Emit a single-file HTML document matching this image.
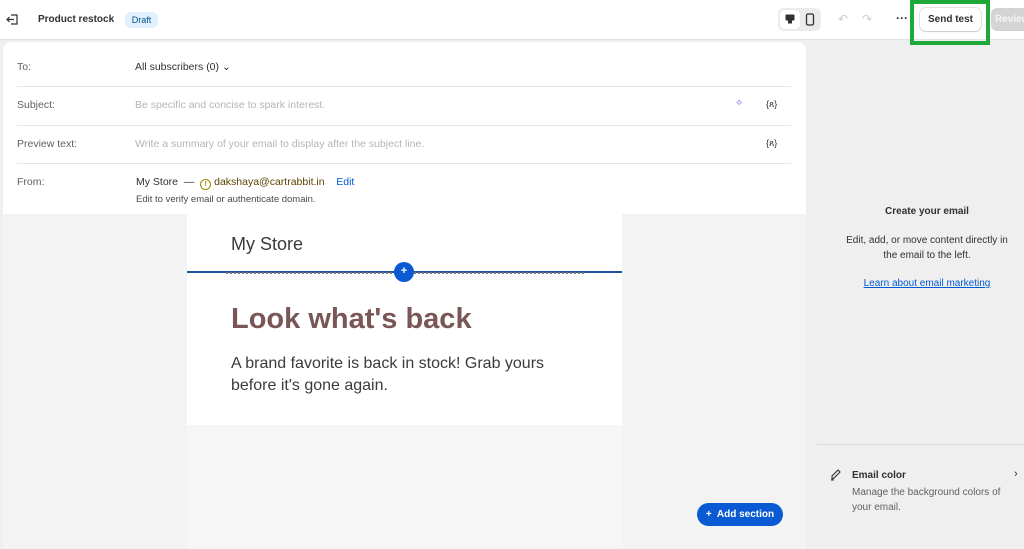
<!DOCTYPE html>
<html><head><style>
*{box-sizing:border-box;margin:0;padding:0}
body{width:1024px;height:549px;overflow:hidden;background:#efefef;font-family:"Liberation Sans",sans-serif;position:relative;color:#303030}
.abs{position:absolute;white-space:nowrap}
.wrap{white-space:normal}
.top{left:0;top:0;width:1024px;height:40px;background:#fff;border-bottom:1px solid #e3e3e3}
.lbl{font-size:10.5px;color:#616161}
.ph{font-size:10.5px;color:#b5b5b5}
.hr{position:absolute;left:17px;width:774px;height:1px;background:#e6e6e6}
</style></head><body>
<div class="abs top">
  <svg class="abs" style="left:6px;top:13px" width="13" height="13" viewBox="0 0 13 13" fill="none" stroke="#303030" stroke-width="1.2"><path d="M5 2h6v9H5M1 6.5h7M3.5 4L1 6.5 3.5 9"/></svg>
  <div class="abs" style="left:38px;top:14px;font-size:10px;font-weight:bold">Product restock</div>
  <div class="abs" style="left:125px;top:12px;width:33px;height:16px;border-radius:6px;background:#e0f0ff;color:#00527c;font-size:9px;text-align:center;line-height:16px">Draft</div>
  <div class="abs" style="left:778px;top:8px;width:43px;height:23px;border-radius:6px;background:#ebebeb"></div>
  <div class="abs" style="left:780px;top:10px;width:20px;height:19px;border-radius:5px;background:#fff"></div>
  <svg class="abs" style="left:784px;top:13px" width="12" height="12" viewBox="0 0 12 12"><rect x="1.5" y="1.5" width="9" height="6" rx="1" fill="#303030"/><rect x="4" y="7.5" width="4" height="3" fill="#303030"/></svg>
  <svg class="abs" style="left:805px;top:13px" width="10" height="13" viewBox="0 0 10 13"><rect x="1.5" y="1" width="7" height="11" rx="1.5" fill="none" stroke="#303030" stroke-width="1.3"/></svg>
  <div class="abs" style="left:838px;top:12px;font-size:12px;color:#ccc">↶</div>
  <div class="abs" style="left:862px;top:12px;font-size:12px;color:#ccc">↷</div>
  <div class="abs" style="left:896px;top:11px;font-size:12px;font-weight:bold;color:#303030">···</div>
  <div class="abs" style="left:910px;top:0;width:80px;height:45px;border:4px solid #1ea83a"></div>
  <div class="abs" style="left:920px;top:8px;width:61px;height:23px;border-radius:6px;background:#fff;box-shadow:0 1px 1px #ccc,0 0 0 1px #e3e3e3;font-size:10px;font-weight:bold;text-align:center;line-height:23px">Send test</div>
  <div class="abs" style="left:991px;top:8px;width:40px;height:23px;border-radius:6px 0 0 6px;background:#d4d4d4;color:#f5f5f5;font-size:10px;font-weight:bold;line-height:23px;padding-left:4px">Review</div>
</div>
<div class="abs" style="left:3px;top:42px;width:803px;height:507px;background:#f3f3f3;border-radius:8px 8px 0 0;overflow:hidden">
  <div class="abs" style="left:0;top:0;width:803px;height:172px;background:#fff"></div>
</div>
<div class="abs lbl" style="left:17px;top:61px">To:</div>
<div class="abs" style="left:135px;top:61px;font-size:10.5px;color:#303030">All subscribers (0) ⌄</div>
<div class="hr" style="top:86px"></div>
<div class="abs lbl" style="left:17px;top:99px">Subject:</div>
<div class="abs ph" style="left:135px;top:99px">Be specific and concise to spark interest.</div>
<div class="abs" style="left:735px;top:98px;font-size:10px;color:#8a5cf0">✧</div>
<div class="abs" style="left:766px;top:99px;font-size:9px">{ጸ}</div>
<div class="hr" style="top:125px"></div>
<div class="abs lbl" style="left:17px;top:138px">Preview text:</div>
<div class="abs ph" style="left:135px;top:138px">Write a summary of your email to display after the subject line.</div>
<div class="abs" style="left:766px;top:138px;font-size:9px">{ጸ}</div>
<div class="hr" style="top:163px"></div>
<div class="abs lbl" style="left:17px;top:176px">From:</div>
<div class="abs" style="left:136px;top:176px;font-size:10.5px">My Store &nbsp;— &nbsp;<span style="display:inline-block;width:11px;height:11px;border:1.2px solid #a08800;border-radius:50%;font-size:7px;text-align:center;line-height:9px;color:#a08800;font-weight:bold;vertical-align:-1px">!</span> <span style="color:#5e4200">dakshaya@cartrabbit.in</span> &nbsp;&nbsp;&nbsp;<span style="color:#005bd3">Edit</span></div>
<div class="abs" style="left:136px;top:194px;font-size:9.5px;color:#4a4a4a">Edit to verify email or authenticate domain.</div>

<div class="abs" style="left:187px;top:214px;width:435px;height:211px;background:#fff"></div>
<div class="abs" style="left:187px;top:425px;width:435px;height:124px;background:#f6f6f7"></div>
<div class="abs" style="left:231px;top:234px;font-size:18px;color:#3b3b3b">My Store</div>
<div class="abs" style="left:187px;top:271px;width:435px;height:1.5px;background:#1c4fa0"></div>
<div class="abs" style="left:226px;top:272px;width:358px;height:2px;border-top:2px dotted #777"></div>
<div class="abs" style="left:394px;top:262px;width:20px;height:20px;border-radius:50%;background:#0a5bd3;color:#fff;font-size:11px;text-align:center;line-height:19px;font-weight:bold">+</div>
<div class="abs" style="left:231px;top:303px;font-size:29px;font-weight:bold;color:#7a5656">Look what's back</div>
<div class="abs wrap" style="left:231px;top:353px;font-size:16px;line-height:22px;color:#3b3b3b;width:340px">A brand favorite is back in stock! Grab yours before it's gone again.</div>
<div class="abs" style="left:697px;top:503px;width:86px;height:23px;border-radius:12px;background:#0a5bd3;color:#fff;font-size:10px;font-weight:bold;text-align:center;line-height:23px">+&nbsp; Add section</div>

<div class="abs" style="left:818px;top:206px;width:218px;text-align:center;font-size:10px;font-weight:bold">Create your email</div>
<div class="abs wrap" style="left:818px;top:234px;width:218px;text-align:center;font-size:10px;line-height:14.5px;color:#303030;padding:0 24px">Edit, add, or move content directly in the email to the left.</div>
<div class="abs" style="left:818px;top:278px;width:218px;text-align:center;font-size:10px;color:#005bd3;text-decoration:underline">Learn about email marketing</div>
<div class="abs" style="left:817px;top:444px;width:207px;height:1px;background:#d9d9d9"></div>
<svg class="abs" style="left:830px;top:469px" width="12" height="12" viewBox="0 0 12 12" fill="none" stroke="#303030" stroke-width="1.1"><path d="M2 10l2-1 6-6-2-2-6 6z M1 11h3"/></svg>
<div class="abs" style="left:852px;top:470px;font-size:10px;font-weight:bold">Email color</div>
<div class="abs" style="left:1014px;top:468px;font-size:11px">›</div>
<div class="abs wrap" style="left:852px;top:486px;width:165px;font-size:10px;line-height:14.5px;color:#616161">Manage the background colors of your email.</div>
</body></html>
